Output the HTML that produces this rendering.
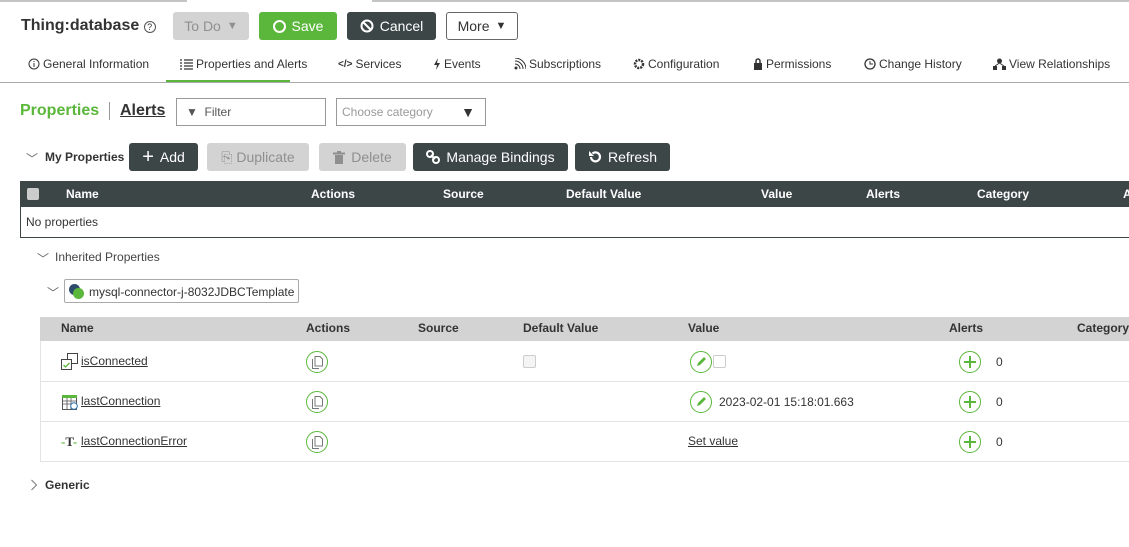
<!DOCTYPE html>
<html><head><style>
*{box-sizing:border-box;margin:0;padding:0}
body{width:1129px;height:547px;background:#fff;font-family:"Liberation Sans",Arial,sans-serif;color:#333;position:relative;overflow:hidden;font-size:12px}
.a{position:absolute;white-space:nowrap}
.btn{position:absolute;height:28px;border-radius:3px;font-size:14px;display:flex;align-items:center;justify-content:center;gap:6px}
.dk{background:#3d4647;color:#fff}
.dis{background:#d3d3d3;color:#8f8f8f}
.tab{position:absolute;top:57px;font-size:12px;color:#333;display:flex;align-items:center;gap:3px}
.th{position:absolute;font-weight:bold;font-size:12px}
.circ{position:absolute;width:22px;height:22px;border:1.5px solid #5bb73b;border-radius:50%}
u{text-decoration:underline}
</style></head><body>
<div class="a" style="left:0;top:0;width:187px;height:2px;background:#c4c4c4"></div>
<div class="a" style="left:372px;top:0;width:757px;height:2px;background:#c4c4c4"></div>

<div class="a" style="left:21px;top:17px;font-size:16px;font-weight:bold;color:#333">Thing:database <span style="display:inline-block;width:12px;height:12px;border:1px solid #555;border-radius:50%;font-size:9px;text-align:center;line-height:10px;font-weight:normal;vertical-align:0px">?</span></div>
<div class="btn dis" style="left:173px;top:12px;width:76px;font-size:14px">To Do <span style="font-size:11px">▼</span></div>
<div class="btn" style="left:259px;top:12px;width:78px;background:#5bb73b;color:#fff"><span style="width:13px;height:13px;border:2px solid #fff;border-radius:50%;display:inline-block"></span>Save</div>
<div class="btn dk" style="left:347px;top:12px;width:89px"><svg width="14" height="14" viewBox="0 0 14 14"><circle cx="7" cy="7" r="5.5" stroke="#fff" stroke-width="2" fill="none"/><line x1="3" y1="3" x2="11" y2="11" stroke="#fff" stroke-width="2"/></svg>Cancel</div>
<div class="btn" style="left:446px;top:12px;width:72px;border:1px solid #666;color:#333">More <span style="font-size:11px">▼</span></div>

<div class="tab" style="left:28px"><svg width="12" height="12"><circle cx="6" cy="6" r="5" fill="none" stroke="#333"/><path d="M6 5v4M6 3v1" stroke="#333"/></svg>General Information</div>
<div class="tab" style="left:180px"><svg width="13" height="11"><path d="M0 1h2M4 1h9M0 4h2M4 4h9M0 7h2M4 7h9M0 10h2M4 10h9" stroke="#333" stroke-width="1.3"/></svg>Properties and Alerts</div>
<div class="a" style="left:166px;top:80px;width:124px;height:2px;background:#5bb73b"></div>
<div class="tab" style="left:338px"><b style="font-size:10px">&lt;/&gt;</b>Services</div>
<div class="tab" style="left:433px"><svg width="8" height="12"><path d="M5 0L1 7h3l-1 5 4-7H4z" fill="#333"/></svg> Events</div>
<div class="tab" style="left:514px"><svg width="12" height="12"><circle cx="2" cy="10" r="1.5" fill="#333"/><path d="M1 6a5 5 0 0 1 5 5M1 3a8 8 0 0 1 8 8M1 0a11 11 0 0 1 11 11" stroke="#333" fill="none"/></svg>Subscriptions</div>
<div class="tab" style="left:633px"><svg width="12" height="12"><circle cx="6" cy="6" r="4" fill="none" stroke="#333" stroke-width="2.5" stroke-dasharray="2 1"/></svg>Configuration</div>
<div class="tab" style="left:753px"><svg width="10" height="12"><rect x="1" y="5" width="8" height="7" fill="#333"/><path d="M3 5V3a2 2 0 0 1 4 0v2" stroke="#333" fill="none" stroke-width="1.5"/></svg>Permissions</div>
<div class="tab" style="left:864px"><svg width="12" height="12"><circle cx="6" cy="6" r="5" fill="none" stroke="#333" stroke-width="1.3"/><path d="M6 3v3h3" stroke="#333" fill="none"/></svg>Change History</div>
<div class="tab" style="left:993px"><svg width="13" height="12"><circle cx="6.5" cy="3" r="2.5" fill="#333"/><rect x="0" y="8" width="4" height="4" fill="#333"/><rect x="9" y="8" width="4" height="4" fill="#333"/><path d="M6.5 5L2 8M6.5 5L11 8" stroke="#333"/></svg>View Relationships</div>
<div class="a" style="left:0;top:82px;width:1129px;height:1px;background:#aaa"></div>

<div class="a" style="left:20px;top:102px;font-size:16px;font-weight:bold;color:#5bb73b">Properties</div>
<div class="a" style="left:109px;top:102px;width:1px;height:18px;background:#999"></div>
<div class="a" style="left:120px;top:102px;font-size:16px;font-weight:bold;color:#333"><u>Alerts</u></div>
<div class="a" style="left:176px;top:98px;width:150px;height:28px;border:1px solid #999;padding:6px 9px;color:#555">▼&nbsp; Filter</div>
<div class="a" style="left:336px;top:98px;width:150px;height:28px;border:1px solid #999;padding:6px 5px;color:#999">Choose category<span style="position:absolute;right:10px;top:5px;color:#333;font-size:14px">▼</span></div>

<div class="a" style="left:26px;top:150px;color:#666">﹀</div>
<div class="a" style="left:45px;top:150px;font-weight:bold;font-size:12px">My Properties</div>
<div class="btn dk" style="left:129px;top:143px;width:69px"><span style="font-size:20px;font-weight:300">+</span>Add</div>
<div class="btn dis" style="left:207px;top:143px;width:102px">⎘ Duplicate</div>
<div class="btn dis" style="left:319px;top:143px;width:87px"><svg width="12" height="13"><rect x="2" y="4" width="8" height="9" fill="#8f8f8f"/><rect x="0" y="1.5" width="12" height="2" fill="#8f8f8f"/><rect x="4" y="0" width="4" height="2" fill="#8f8f8f"/></svg>Delete</div>
<div class="btn dk" style="left:413px;top:143px;width:155px"><svg width="14" height="14"><circle cx="4" cy="4" r="3" stroke="#fff" stroke-width="2" fill="none"/><circle cx="10" cy="10" r="3" stroke="#fff" stroke-width="2" fill="none"/><path d="M5 5l4 4" stroke="#fff" stroke-width="2"/></svg>Manage Bindings</div>
<div class="btn dk" style="left:575px;top:143px;width:95px"><svg width="14" height="14"><path d="M3 7a4.5 4.5 0 1 0 1.5-3.5" stroke="#fff" stroke-width="2.2" fill="none"/><path d="M1 1v5h5z" fill="#fff"/></svg>Refresh</div>

<div class="a" style="left:20px;top:181px;width:1109px;height:57px;border:1px solid #3d4647;border-right:none"></div>
<div class="a" style="left:20px;top:181px;width:1109px;height:26px;background:#3d4647;color:#fff"></div>
<div class="a" style="left:27px;top:188px;width:12px;height:12px;background:#ccc;border-radius:2px"></div>
<div class="th" style="left:66px;top:187px;color:#fff">Name</div>
<div class="th" style="left:311px;top:187px;color:#fff">Actions</div>
<div class="th" style="left:443px;top:187px;color:#fff">Source</div>
<div class="th" style="left:566px;top:187px;color:#fff">Default Value</div>
<div class="th" style="left:761px;top:187px;color:#fff">Value</div>
<div class="th" style="left:866px;top:187px;color:#fff">Alerts</div>
<div class="th" style="left:977px;top:187px;color:#fff">Category</div>
<div class="th" style="left:1123px;top:187px;color:#fff">A</div>
<div class="a" style="left:26px;top:215px">No properties</div>

<div class="a" style="left:37px;top:250px;color:#666">﹀</div>
<div class="a" style="left:55px;top:250px;color:#444">Inherited Properties</div>
<div class="a" style="left:47px;top:284px;color:#666">﹀</div>
<div class="a" style="left:64px;top:279px;width:235px;height:24px;border:1px solid #aaa;border-radius:2px;padding:5px 0 0 24px;color:#333">mysql-connector-j-8032JDBCTemplate</div>
<div class="a" style="left:69px;top:284px;width:11px;height:11px;border-radius:50%;background:#2d4b6b"></div>
<div class="a" style="left:73px;top:288px;width:11px;height:11px;border-radius:50%;background:#5bb73b"></div>

<div class="a" style="left:40px;top:317px;width:1089px;height:145px;border:1px solid #e3e3e3;border-right:none"></div>
<div class="a" style="left:40px;top:317px;width:1089px;height:24px;background:#d3d3d3"></div>
<div class="th" style="left:61px;top:321px">Name</div>
<div class="th" style="left:306px;top:321px">Actions</div>
<div class="th" style="left:418px;top:321px">Source</div>
<div class="th" style="left:523px;top:321px">Default Value</div>
<div class="th" style="left:688px;top:321px">Value</div>
<div class="th" style="left:949px;top:321px">Alerts</div>
<div class="th" style="left:1077px;top:321px">Category</div>
<div class="a" style="left:40px;top:381px;width:1089px;height:1px;background:#e3e3e3"></div>
<div class="a" style="left:40px;top:421px;width:1089px;height:1px;background:#e3e3e3"></div>

<svg class="a" style="left:61px;top:353px" width="18" height="18" viewBox="0 0 18 18"><rect x="6.5" y="0.5" width="10" height="10" fill="none" stroke="#444"/><rect x="0.5" y="6.5" width="10" height="10" fill="#fff" stroke="#444"/><path d="M2.5 12l2 2 4-4" stroke="#5bb73b" fill="none" stroke-width="1.3"/></svg>
<svg class="a" style="left:62px;top:393px" width="16" height="17" viewBox="0 0 16 17"><rect x="0.5" y="2.5" width="14" height="14" fill="none" stroke="#555"/><rect x="0" y="2" width="15" height="3" fill="#5bb73b"/><path d="M1 8h13M1 11h13M5 5v11M9 5v11" stroke="#555" stroke-width=".8"/><circle cx="12" cy="13" r="3.3" fill="#fff" stroke="#2a6fb0"/></svg>
<div class="a" style="left:61px;top:434px;font-family:'Liberation Serif',serif;font-weight:bold;font-size:13px;color:#333"><span style="color:#5bb73b">-</span>T<span style="color:#5bb73b">-</span></div>
<div class="a" style="left:81px;top:354px"><u>isConnected</u></div>
<div class="a" style="left:81px;top:394px"><u>lastConnection</u></div>
<div class="a" style="left:81px;top:434px"><u>lastConnectionError</u></div>

<div class="circ" style="left:306px;top:351px"></div><svg class="a" style="left:312px;top:356px" width="11" height="13"><path d="M3 .5h5l2.5 2.5v7H3z" fill="none" stroke="#777"/><path d="M.5 3v9.5H7" fill="none" stroke="#777"/></svg>
<div class="circ" style="left:306px;top:391px"></div><svg class="a" style="left:312px;top:396px" width="11" height="13"><path d="M3 .5h5l2.5 2.5v7H3z" fill="none" stroke="#777"/><path d="M.5 3v9.5H7" fill="none" stroke="#777"/></svg>
<div class="circ" style="left:306px;top:431px"></div><svg class="a" style="left:312px;top:436px" width="11" height="13"><path d="M3 .5h5l2.5 2.5v7H3z" fill="none" stroke="#777"/><path d="M.5 3v9.5H7" fill="none" stroke="#777"/></svg>

<div class="a" style="left:523px;top:355px;width:13px;height:13px;border:1px solid #ccc;border-radius:2px;background:#f4f4f4"></div>

<div class="circ" style="left:690px;top:351px"></div><svg class="a" style="left:695px;top:356px" width="12" height="12"><path d="M2 10l1-3 6-6 2 2-6 6z" fill="#5bb73b"/></svg>
<div class="a" style="left:713px;top:355px;width:13px;height:13px;border:1px solid #ccc;border-radius:2px"></div>
<div class="circ" style="left:690px;top:391px"></div><svg class="a" style="left:695px;top:396px" width="12" height="12"><path d="M2 10l1-3 6-6 2 2-6 6z" fill="#5bb73b"/></svg>
<div class="a" style="left:719px;top:395px">2023-02-01 15:18:01.663</div>
<div class="a" style="left:688px;top:434px"><u>Set value</u></div>

<div class="circ" style="left:959px;top:351px"></div><svg class="a" style="left:963px;top:355px" width="14" height="14"><path d="M7 1v12M1 7h12" stroke="#5bb73b" stroke-width="2"/></svg><div class="a" style="left:996px;top:355px">0</div>
<div class="circ" style="left:959px;top:391px"></div><svg class="a" style="left:963px;top:395px" width="14" height="14"><path d="M7 1v12M1 7h12" stroke="#5bb73b" stroke-width="2"/></svg><div class="a" style="left:996px;top:395px">0</div>
<div class="circ" style="left:959px;top:431px"></div><svg class="a" style="left:963px;top:435px" width="14" height="14"><path d="M7 1v12M1 7h12" stroke="#5bb73b" stroke-width="2"/></svg><div class="a" style="left:996px;top:435px">0</div>

<svg class="a" style="left:30px;top:479px" width="8" height="12"><path d="M1.5 1l5 5-5 5" stroke="#777" fill="none"/></svg>
<div class="a" style="left:45px;top:478px;font-weight:bold">Generic</div>
</body></html>
